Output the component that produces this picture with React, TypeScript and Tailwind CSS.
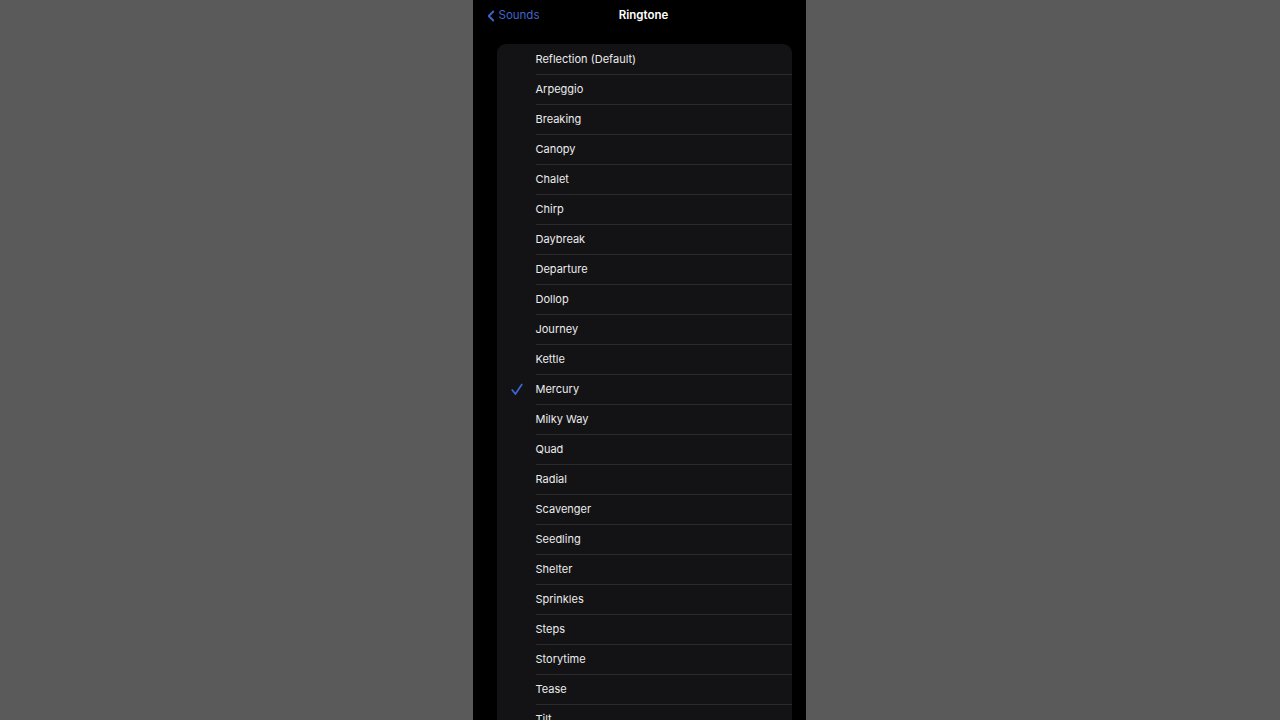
import { ChevronLeft } from 'lucide-react';

const tones = [
  'Reflection (Default)',
  'Arpeggio',
  'Breaking',
  'Canopy',
  'Chalet',
  'Chirp',
  'Daybreak',
  'Departure',
  'Dollop',
  'Journey',
  'Kettle',
  'Mercury',
  'Milky Way',
  'Quad',
  'Radial',
  'Scavenger',
  'Seedling',
  'Shelter',
  'Sprinkles',
  'Steps',
  'Storytime',
  'Tease',
  'Tilt',
  'Twinkle',
];

function Check() {
  return (
    <svg width="12" height="13" viewBox="0 0 12 13" fill="none">
      <path
        d="M1.2 7 L4.4 11 L10.8 1.5"
        stroke="#3b66d4"
        strokeWidth="1.7"
        strokeLinecap="round"
        strokeLinejoin="round"
      />
    </svg>
  );
}

export default function App() {
  return (
    <div className="h-[720px] w-[1280px] overflow-hidden bg-[#5a5a5b] flex justify-center font-['Inter',sans-serif]">
      <div className="ml-[-2px] w-[333px] h-full bg-black flex flex-col overflow-hidden">
        {/* Nav bar */}
        <div className="relative h-[30px] shrink-0 flex items-center pt-[2px]">
          <div className="flex items-center pl-[9px] text-[#4065cc] text-[11.5px]">
            <ChevronLeft className="w-[18px] h-[18px]" strokeWidth={2.4} />
            <span className="ml-[-1px]">Sounds</span>
          </div>
          <div className="absolute inset-0 pt-[2px] flex items-center justify-center pl-[9px] text-white text-[11.5px] font-semibold">
            Ringtone
          </div>
        </div>

        {/* List */}
        <div className="mt-[14px] ml-[24px] w-[295px] bg-[#131315] rounded-t-[9px]">
          {tones.map((t, i) => (
            <div key={t} className="h-[30px] flex items-stretch">
              <div className="w-[39px] shrink-0 flex items-center justify-center pl-[1px]">
                {t === 'Mercury' && <Check />}
              </div>
              <div
                className={
                  'flex-1 flex items-center text-[11px] text-[#ececee] ' +
                  (i > 0 ? 'border-t border-[#2a2a2d]' : '')
                }
              >
                {t}
              </div>
            </div>
          ))}
        </div>
      </div>
    </div>
  );
}
